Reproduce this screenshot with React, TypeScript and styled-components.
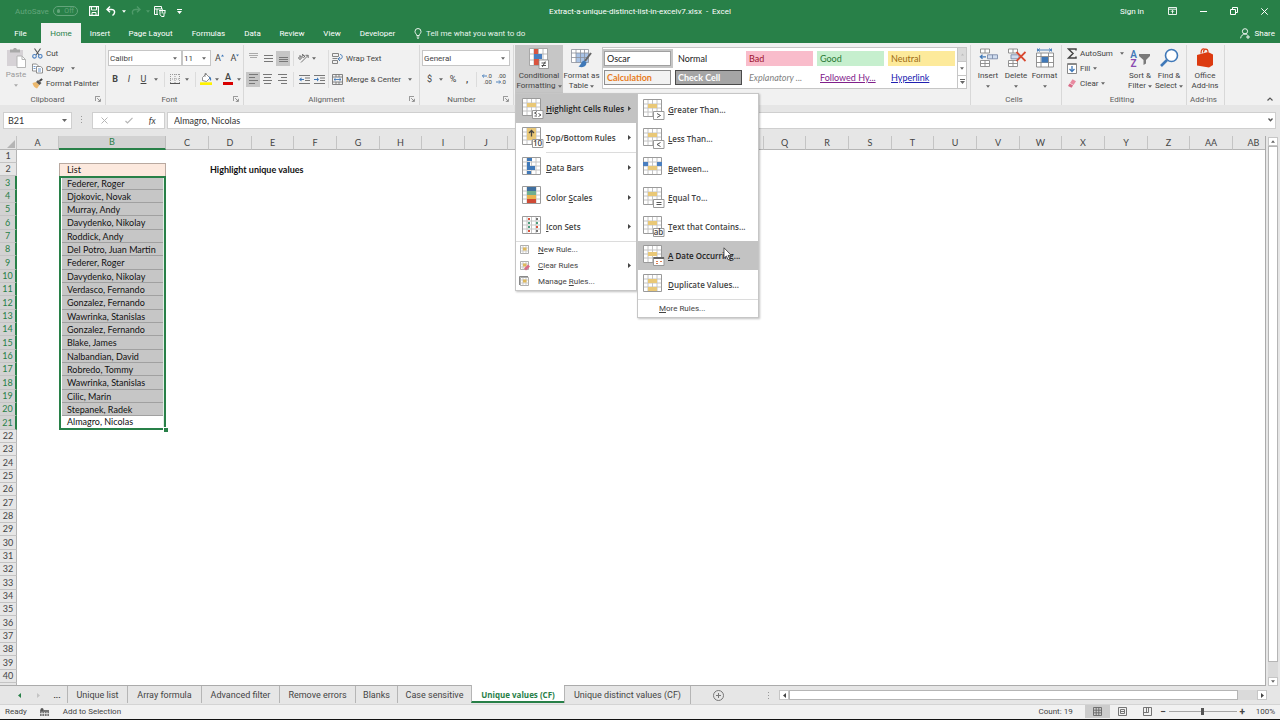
import React from "react";
import styled, { createGlobalStyle, css } from "styled-components";

const GREEN = "#288048";
const UI = 'Roboto, "Open Sans", sans-serif';
const MENU = '"Open Sans", "Noto Sans", sans-serif';
const CELL = 'Lato, "Open Sans", sans-serif';

const GlobalStyle = createGlobalStyle`
  * { box-sizing: border-box; }
  body { margin: 0; background: #e6e6e6; overflow: hidden; }
  button, input, select { font: inherit; color: inherit; margin: 0; }
  svg { display: block; flex: none; }
`;

const Window = styled.div`
  display: flex;
  flex-direction: column;
  height: 100vh;
  font-family: ${UI};
  font-size: 8px;
  line-height: 11px;
  color: #444;
  background: #e6e6e6;
`;

const PlainButton = styled.button`
  display: flex;
  align-items: center;
  justify-content: center;
  border: 0;
  padding: 0;
  background: none;
  flex: none;
  white-space: nowrap;
`;

/* ---------- Title bar ---------- */

const TitleBar = styled.header`
  display: grid;
  grid-template-columns: 1fr auto 1fr;
  align-items: center;
  height: 23px;
  flex: none;
  padding-bottom: 1px;
  background: ${GREEN};
  color: #fff;
`;

const QuickAccess = styled.div`
  display: flex;
  align-items: center;
  padding-left: 15px;
`;

const AutoSave = styled.label`
  display: flex;
  align-items: center;
  justify-content: space-between;
  width: 63px;
  margin-right: 10px;
  color: #63a57b;
`;

const Toggle = styled.button`
  display: flex;
  align-items: center;
  gap: 4px;
  width: 25px;
  height: 10px;
  padding: 0 3px;
  border: 1px solid #63a57b;
  border-radius: 5px;
  background: none;
  font-size: 7px;
  line-height: 8px;
  color: #63a57b;
  &::before {
    content: "";
    width: 4px;
    height: 4px;
    border-radius: 2px;
    background: #63a57b;
  }
`;

const TitleButton = styled(PlainButton)<{ $w: number }>`
  width: ${(p) => p.$w}px;
  height: 20px;
`;

const TitleText = styled.h1`
  margin: 0;
  font-size: 8px;
  font-weight: 400;
`;

const WindowControls = styled.div`
  display: flex;
  align-items: center;
  justify-content: flex-end;
`;

/* ---------- Ribbon tabs ---------- */

const TabBar = styled.nav`
  display: flex;
  align-items: stretch;
  height: 20px;
  flex: none;
  background: ${GREEN};
  color: #fff;
`;

const RibbonTab = styled(PlainButton)<{ $w: number; $active?: boolean }>`
  width: ${(p) => p.$w}px;
  ${(p) =>
    p.$active &&
    css`
      background: #f1f1f1;
      color: ${GREEN};
    `}
`;

const TellMe = styled(PlainButton)`
  gap: 4px;
  padding-left: 9px;
  color: #e4f2e9;
`;

const Share = styled(PlainButton)`
  gap: 4px;
  margin-left: auto;
  padding-right: 5px;
`;

/* ---------- Ribbon ---------- */

const Ribbon = styled.section`
  display: flex;
  height: 62px;
  flex: none;
  padding-top: 2px;
  background: #f1f1f1;
`;

const Group = styled.div<{ $w?: number }>`
  display: flex;
  flex-direction: column;
  position: relative;
  ${(p) => (p.$w ? `width: ${p.$w}px; flex: none;` : "flex: 1; min-width: 0;")}
  border-right: 1px solid #d8d8d8;
`;

const GroupBody = styled.div`
  display: flex;
  height: 48px;
  flex: none;
`;

const GroupLabel = styled.div`
  display: flex;
  align-items: center;
  height: 12px;
  padding-right: 4px;
  color: #5e5e5e;
  span {
    flex: 1;
    text-align: center;
  }
`;

const BigButton = styled.button<{ $w: number; $active?: boolean; $dim?: boolean }>`
  display: flex;
  flex-direction: column;
  align-items: center;
  width: ${(p) => p.$w}px;
  height: 48px;
  flex: none;
  border: 0;
  padding: 3px 0 0;
  background: ${(p) => (p.$active ? "#c6c6c6" : "none")};
  color: ${(p) => (p.$dim ? "#9a9a9a" : "#444")};
  white-space: nowrap;
  line-height: 10px;
  svg {
    margin-bottom: 2px;
  }
`;

const Caption = styled.span`
  display: flex;
  align-items: center;
  justify-content: center;
  gap: 2px;
  height: 10px;
  svg {
    margin: 0;
  }
`;

const Stack = styled.div<{ $w?: number; $pad?: number }>`
  display: flex;
  flex-direction: column;
  ${(p) => p.$w && `width: ${p.$w}px;`}
  padding: 1px 0 0 ${(p) => p.$pad ?? 0}px;
  flex: none;
`;

const SmallButton = styled(PlainButton)`
  justify-content: flex-start;
  gap: 3px;
  height: 15px;
`;

const Rows = styled.div<{ $pad?: number }>`
  display: flex;
  flex-direction: column;
  gap: 5px;
  padding: 5px 0 0 ${(p) => p.$pad ?? 0}px;
`;

const Row = styled.div`
  display: flex;
  align-items: center;
  height: 16px;
`;

const Tool = styled(PlainButton)<{ $w: number; $active?: boolean }>`
  width: ${(p) => p.$w}px;
  height: 15px;
  background: ${(p) => (p.$active ? "#c6c6c6" : "none")};
  font-size: 9px;
`;

const Bar = styled.i<{ $gap?: number; $h?: number }>`
  width: 1px;
  height: ${(p) => p.$h ?? 15}px;
  margin: 0 ${(p) => p.$gap ?? 4}px;
  background: #dcdcdc;
  flex: none;
`;

const Combo = styled.label<{ $w: number }>`
  display: flex;
  align-items: center;
  width: ${(p) => p.$w}px;
  height: 16px;
  padding-right: 4px;
  border: 1px solid #c6c6c6;
  background: #fff;
  flex: none;
  select {
    flex: 1;
    min-width: 0;
    height: 14px;
    appearance: none;
    border: 0;
    padding: 0 0 0 1px;
    background: none;
  }
`;

const Gallery = styled.div`
  display: flex;
  flex: 1;
  min-width: 0;
  height: 42px;
  margin: 2px 3px 0 2px;
  border: 1px solid #c6c6c6;
  background: #fff;
`;

const GalleryGrid = styled.div`
  display: grid;
  grid-template-columns: repeat(5, 1fr);
  grid-auto-rows: 15px;
  gap: 4px 4px;
  flex: 1;
  min-width: 0;
  padding: 3px 2px 0 1px;
`;

const StyleTile = styled.button<{
  $bg?: string;
  $fg?: string;
  $edge?: string;
  $picked?: boolean;
  $bold?: boolean;
  $italic?: boolean;
  $line?: boolean;
}>`
  overflow: hidden;
  padding: 0 0 0 2px;
  border: 1px solid ${(p) => p.$edge ?? "transparent"};
  outline: ${(p) => (p.$picked ? "2px solid #c6c6c6" : "none")};
  background: ${(p) => p.$bg ?? "#fff"};
  color: ${(p) => p.$fg ?? "#222"};
  font-family: ${CELL};
  font-size: 9px;
  line-height: 12px;
  text-align: left;
  white-space: nowrap;
  font-weight: ${(p) => (p.$bold ? 700 : 400)};
  font-style: ${(p) => (p.$italic ? "italic" : "normal")};
  text-decoration: ${(p) => (p.$line ? "underline" : "none")};
`;

const GallerySide = styled.div`
  display: grid;
  grid-template-rows: 1fr 1fr 1fr;
  width: 9px;
  border-left: 1px solid #c6c6c6;
  button {
    width: 8px;
    height: 100%;
  }
  button + button {
    border-top: 1px solid #c6c6c6;
  }
  button:first-child {
    background: #dadada;
  }
`;

/* ---------- Drop-down menus ---------- */

const MenuAnchor = styled.div`
  position: relative;
  flex: none;
  margin-left: 1px;
`;

const menuBox = css`
  position: absolute;
  width: 122px;
  margin: 0;
  list-style: none;
  border: 1px solid #c6c6c6;
  background: #fff;
  box-shadow: 1px 1px 2px rgba(0, 0, 0, 0.25);
  z-index: 10;
`;

const Menu = styled.ul`
  ${menuBox}
  top: 48px;
  left: 0;
  padding: 0 0 1px;
`;

const SubMenu = styled.ul`
  ${menuBox}
  top: -1px;
  left: 121px;
  padding: 1px 0;
`;

const MenuRow = styled.li<{ $h: number; $active?: boolean }>`
  position: relative;
  height: ${(p) => p.$h}px;
  background: ${(p) => (p.$active ? "#c3c3c3" : "none")};
  color: ${(p) => (p.$active ? "#222" : "#444")};
`;

const MenuButton = styled.button<{ $bold?: boolean; $gap?: number; $pad?: number }>`
  display: flex;
  align-items: center;
  gap: ${(p) => p.$gap ?? 3}px;
  width: 100%;
  height: 100%;
  padding: 0 5px 0 ${(p) => p.$pad ?? 5}px;
  border: 0;
  background: none;
  text-align: left;
  white-space: nowrap;
  font-family: ${(p) => (p.$bold ? MENU : UI)};
  font-weight: ${(p) => (p.$bold ? 600 : 400)};
  span {
    flex: 1;
  }
`;

const MenuRule = styled.li<{ $inset?: number }>`
  height: 1px;
  margin-left: ${(p) => p.$inset ?? 0}px;
  background: #dcdcdc;
`;

const Pointer = styled.svg`
  position: absolute;
  top: 6px;
  left: 85px;
`;

/* ---------- Formula bar ---------- */

const FormulaBar = styled.div`
  display: flex;
  align-items: center;
  height: 31px;
  flex: none;
  padding: 0 4px 1px 3px;
  background: #e6e6e6;
  font-family: ${CELL};
  font-size: 9px;
`;

const BarField = styled.label<{ $w?: number }>`
  display: flex;
  align-items: center;
  ${(p) => (p.$w ? `width: ${p.$w}px; flex: none;` : "flex: 1; min-width: 0;")}
  height: 17px;
  padding-right: ${(p) => (p.$w ? 4 : 2)}px;
  border: 1px solid #cfcfcf;
  background: #fff;
  input {
    flex: 1;
    min-width: 0;
    height: 15px;
    border: 0;
    padding: 0 0 0 ${(p) => (p.$w ? 4 : 6)}px;
    background: none;
    outline: 0;
    color: #333;
  }
`;

const BarButtons = styled.div`
  display: flex;
  width: 73px;
  height: 17px;
  margin-right: 2px;
  border: 1px solid #cfcfcf;
  background: #fff;
  flex: none;
  button {
    flex: 1;
  }
`;

/* ---------- Grid ---------- */

const Workspace = styled.main`
  display: flex;
  flex: 1;
  min-height: 0;
`;

const SheetPane = styled.div`
  flex: 1;
  min-width: 0;
  overflow: hidden;
  border-right: 1px solid #ababab;
  border-bottom: 1px solid #ababab;
  background: #fff;
`;

const Sheet = styled.table`
  width: calc(100% + 10px);
  table-layout: fixed;
  border-collapse: separate;
  border-spacing: 0;
  font-family: ${CELL};
  font-size: 9px;
  line-height: 12px;
  color: #111;
  th,
  td {
    padding: 0;
    white-space: nowrap;
  }
`;

const ColHead = styled.th<{ $on?: boolean }>`
  height: 14px;
  border-right: 1px solid ${(p) => (p.$on ? "#bdbdbd" : "#c4c4c4")};
  border-bottom: ${(p) => (p.$on ? `2px solid ${GREEN}` : "1px solid #b5b5b5")};
  background: ${(p) => (p.$on ? "#d2d2d2" : "#e6e6e6")};
  color: ${(p) => (p.$on ? GREEN : "#444")};
  font-weight: 400;
`;

const RowHead = styled.th<{ $on?: boolean }>`
  border-right: ${(p) => (p.$on ? `2px solid ${GREEN}` : "1px solid #b5b5b5")};
  border-bottom: 1px solid #c4c4c4;
  background: ${(p) => (p.$on ? "#d2d2d2" : "#e6e6e6")};
  color: ${(p) => (p.$on ? GREEN : "#444")};
  font-weight: 400;
`;

const SheetRow = styled.tr<{ $tall: boolean }>`
  height: ${(p) => (p.$tall ? 14 : 13)}px;
`;

const Cell = styled.td<{ $kind?: "title" | "picked" | "head" | "current" }>`
  ${(p) =>
    p.$kind === "title" &&
    css`
      font-weight: 700;
      && {
        padding-left: 1px;
      }
    `}
  ${(p) =>
    p.$kind === "head" &&
    css`
      border: 1px solid #b9a9a0;
      border-bottom: 0;
      background: #fce9de;
      && {
        padding-left: 7px;
      }
    `}
  ${(p) =>
    (p.$kind === "picked" || p.$kind === "current") &&
    css`
      position: relative;
      border: 0 solid ${GREEN};
      border-width: 0 2px;
      background: ${p.$kind === "picked" ? "#c6c6c6" : "#fff"};
      box-shadow: inset 1px 0 #fff, inset -1px 0 #e4efe8, inset 0 -1px ${p.$kind === "picked" ? "#a0a0a0" : "#fff"};
      && {
        padding-left: 6px;
      }
    `}
  ${(p) => p.$kind === "current" && `border-bottom-width: 2px;`}
`;

const FirstCell = styled(Cell)`
  border-top-width: 2px;
`;

const FillHandle = styled.i`
  position: absolute;
  right: -4px;
  bottom: -4px;
  width: 5px;
  height: 5px;
  border: 1px solid #fff;
  border-width: 1px 0 0 1px;
  background: ${GREEN};
`;

const VScroll = styled.div`
  display: flex;
  flex-direction: column;
  width: 14px;
  flex: none;
  padding: 1px 2px 0 2px;
  background: #e6e6e6;
`;

const ScrollButton = styled(PlainButton)`
  width: 10px;
  height: 9px;
  border: 1px solid #c6c6c6;
  background: #fff;
`;

const VTrack = styled.div`
  flex: 1;
  padding-bottom: 15px;
  background: #dadada;
`;

const Thumb = styled.div`
  height: 100%;
  border: 1px solid #b5b5b5;
  background: #fff;
`;

/* ---------- Sheet tabs ---------- */

const SheetBar = styled.div`
  display: flex;
  align-items: stretch;
  height: 19px;
  flex: none;
  padding-right: 13px;
  background: #e6e6e6;
  border-bottom: 1px solid #d4d4d4;
`;

const SheetNav = styled.div`
  display: flex;
  align-items: center;
  width: 67px;
  flex: none;
  padding-left: 10px;
  color: #222;
  font-weight: 700;
`;

const SheetTab = styled(PlainButton)<{ $w: number; $active?: boolean }>`
  width: ${(p) => p.$w}px;
  height: 17px;
  padding-top: 1px;
  border-left: 1px solid #b5b5b5;
  font-size: 9px;
  ${(p) =>
    p.$active &&
    css`
      margin-top: -1px;
      height: 18px;
      padding-top: 3px;
      border-bottom: 2px solid ${GREEN};
      background: #fff;
      color: ${GREEN};
      font-family: ${MENU};
      font-weight: 700;
      font-size: 8px;
    `}
`;

const SheetAdd = styled(PlainButton)`
  width: 56px;
  border-left: 1px solid #b5b5b5;
`;

const HScroll = styled.div`
  display: flex;
  align-items: center;
  flex: 1;
  margin-left: 22px;
`;

const HButton = styled(ScrollButton)`
  height: 10px;
`;

const HTrack = styled.div`
  flex: 1;
  height: 10px;
  padding-right: 19px;
  background: #dadada;
`;

/* ---------- Status bar ---------- */

const StatusBar = styled.footer`
  display: flex;
  align-items: center;
  height: 15px;
  flex: none;
  padding: 0 5px 1px 5px;
  border-bottom: 1px solid #111;
  background: #f1f1f1;
`;

const StatusRight = styled.div`
  display: flex;
  align-items: center;
  margin-left: auto;
`;

const ViewButton = styled(PlainButton)<{ $active?: boolean }>`
  width: 25px;
  height: 13px;
  background: ${(p) => (p.$active ? "#cccccc" : "none")};
`;

const Zoom = styled.input`
  width: 68px;
  height: 9px;
  margin: 0 2px;
  appearance: none;
  background: linear-gradient(#a6a6a6, #a6a6a6) center / 100% 1px no-repeat;
  &::-webkit-slider-thumb {
    appearance: none;
    width: 3px;
    height: 7px;
    background: #555;
  }
`;

/* ---------- Icons ---------- */

const Caret = ({ c = "#666", up = false, w = 5 }: { c?: string; up?: boolean; w?: number }) => (
  <svg width={w} height="3" viewBox="0 0 5 3">
    <path d={up ? "M0 3h5L2.500 0z" : "M0 0h5L2.500 3z"} fill={c} />
  </svg>
);

const SideCaret = ({ c = "#444", left = false }: { c?: string; left?: boolean }) => (
  <svg width="3" height="5" viewBox="0 0 3 5">
    <path d={left ? "M3 0v5L0 2.500z" : "M0 0v5L3 2.500z"} fill={c} />
  </svg>
);

const Launcher = () => (
  <svg width="6" height="6" viewBox="0 0 6 6" fill="none" stroke="#777" strokeWidth=".8">
    <path d="M.4 5V.4H5M2.200 2.200L5.200 5.200M5.400 2.800v2.600H2.800" />
  </svg>
);

const SaveIcon = () => (
  <svg width="10" height="10" viewBox="0 0 10 10" fill="none" stroke="#fff">
    <path d="M.6.6h8.800v8.800H.6z" strokeWidth="1.200" />
    <path d="M2.500 1v3h5V1M3 9V6.500h4V9" />
  </svg>
);

const UndoIcon = ({ flip, c = "#fff" }: { flip?: boolean; c?: string }) => (
  <svg width="10" height="10" viewBox="0 0 10 10" fill="none" stroke={c} strokeWidth="1.400">
    <path
      d={flip ? "M6 .5L9 3.500 6 6.300M9 3.500H4.500C1.500 3.500.8 6 2 8.500" : "M4 .5L1 3.500 4 6.300M1 3.500h4.500C9 3.500 9.800 7 6.500 9.500"}
    />
  </svg>
);

const TouchIcon = () => (
  <svg width="12" height="11" viewBox="0 0 12 11" fill="none" stroke="#fff">
    <path d="M7.500 3V.5h-7v8H4M.5 3h7M3 3v5" />
    <path d="M5 4.500h6.500M6 4.500v4l1.500 2h2.500V6.500M8.200 2.500v5M11 4.500v3" />
  </svg>
);

const CustomizeIcon = () => (
  <svg width="5" height="5" viewBox="0 0 5 5" fill="#fff">
    <path d="M0 0h5v1H0zM0 2h5L2.500 5z" />
  </svg>
);

const BulbIcon = () => (
  <svg width="8" height="11" viewBox="0 0 8 11" fill="none" stroke="#fff" strokeWidth=".9">
    <path d="M2.700 7.500C2.700 6 1 5.500 1 3.500a3 3 0 016 0C7 5.500 5.300 6 5.300 7.500zM2.700 9h2.600M3.200 10.300h1.600" />
  </svg>
);

const PersonIcon = () => (
  <svg width="11" height="11" viewBox="0 0 11 11" fill="none" stroke="#fff" strokeWidth=".9">
    <circle cx="5" cy="3.300" r="2.600" />
    <path d="M.6 10.300C1 7.500 3 6 5 6c1 0 1.800.3 2.500.9M8 7v4M6 9h4" />
  </svg>
);

const PasteIcon = () => (
  <svg width="19" height="20" viewBox="0 0 19 20">
    <path d="M0 2h16v16H0z" fill="#d6d2d6" />
    <path d="M3 1.500h3L7 0h2l1 1.500h3V4.500H3z" fill="#a9a9a9" />
    <path d="M10 8h5l3.500 3.500V19.500H10z" fill="#fff" stroke="#b5b5b5" />
    <path d="M15 8v3.500h3.500" fill="none" stroke="#b5b5b5" />
  </svg>
);

const CutIcon = () => (
  <svg width="11" height="11" viewBox="0 0 11 11" fill="none">
    <path d="M2.500.5l4.500 6.500M8.500.5L4 7" stroke="#555" strokeWidth="1.100" />
    <circle cx="2.500" cy="8.300" r="1.800" stroke="#4a7fc0" strokeWidth="1.100" />
    <circle cx="8.300" cy="8.300" r="1.800" stroke="#4a7fc0" strokeWidth="1.100" />
  </svg>
);

const CopyIcon = () => (
  <svg width="11" height="11" viewBox="0 0 11 11" fill="#fff" stroke="#777" strokeWidth=".8">
    <path d="M.5 1h4L6 2.500V8H.5z" />
    <path d="M4.500 3.500h4L10.500 5v5h-6z" />
    <path d="M1.500 3.500h2M1.500 5.500h2M6 6h3M6 8h3" stroke="#4a7fc0" />
  </svg>
);

const BrushIcon = () => (
  <svg width="11" height="11" viewBox="0 0 11 11">
    <path d="M.5 5l3.500-1 3.500 3-2.500 3.500C3 10 1 8 .5 5z" fill="#ecb86c" />
    <path d="M4 4l2-2 3.500 3-2 2z" fill="#555" />
    <path d="M7.500 3L10.200 1" stroke="#444" strokeWidth="2" />
  </svg>
);

const BordersIcon = () => (
  <svg width="10" height="10" viewBox="0 0 10 10" fill="none" stroke="#999" strokeDasharray="1 1">
    <path d="M.5 0v9M5 0v9M9.500 0v9M0 .5h10M0 5h10" />
    <path d="M0 9.500h10" stroke="#555" strokeDasharray="none" />
  </svg>
);

const FillColorIcon = () => (
  <svg width="12" height="12" viewBox="0 0 12 12">
    <path d="M2.500 4.500L6 1l4 4-3.500 3.500-4-1z" fill="#fff" stroke="#777" strokeWidth=".8" />
    <path d="M5 4V.5h1.500" stroke="#777" fill="none" strokeWidth=".8" />
    <path d="M9 3.500c2 .5 2.500 2 2 4.500-1-1-2-2-2-4.500z" fill="#3f78b8" />
    <path d="M0 9.300h12V12H0z" fill="#fff200" />
  </svg>
);

const FontColor = styled.span`
  border-bottom: 3px solid #d80000;
  padding: 0 2px;
  line-height: 9px;
  font-weight: 600;
`;

const GrowFont = styled.span`
  display: flex;
  font-size: 9px;
  svg {
    margin-top: 1px;
  }
`;

const Lines = ({ rows, w = 9, c = "#777" }: { rows: [number, number, number][]; w?: number; c?: string }) => (
  <svg width={w} height="10" viewBox={`0 0 ${w} 10`} fill={c}>
    {rows.map(([x, y, len], i) => (
      <rect key={i} x={x} y={y} width={len} height="1" />
    ))}
  </svg>
);

const OrientIcon = () => (
  <svg width="11" height="10" viewBox="0 0 11 10" fill="none" stroke="#666" strokeWidth=".9">
    <path d="M3 9.500l7-7M7.500 2.300h2.700V5" />
    <circle cx="2" cy="5" r="1.300" />
    <path d="M3.500 4L1.500 2M4 1l3 3" />
    <circle cx="5.300" cy="3.300" r="1.200" />
  </svg>
);

const IndentIcon = ({ right }: { right?: boolean }) => (
  <svg width="11" height="9" viewBox="0 0 11 9" fill="#777">
    <path d="M0 0h11v1H0zM6 2.500h5v1H6zM6 5h5v1H6zM0 8h11v1H0z" />
    <path d={right ? "M0 4h3V2.300l2 2.100-2 2.100V5H0z" : "M5 4H2.500V2.300L0 4.400l2.500 2.100V5H5z"} fill="#3f78b8" />
  </svg>
);

const WrapIcon = () => (
  <svg width="11" height="11" viewBox="0 0 11 11" fill="none" stroke="#777" strokeWidth=".9">
    <path d="M.5.5h6v3h-6zM.5 7.500h5v3h-5zM.5 5.500h5" />
    <path d="M8 1.500c3 0 3 4.500 0 4.500H6.500M8 4L6 6l2 2" stroke="#3f78b8" />
  </svg>
);

const MergeIcon = () => (
  <svg width="11" height="11" viewBox="0 0 11 11" fill="none" stroke="#777" strokeWidth=".9">
    <path d="M.5.5h10v10H.5zM.5 3h10M.5 8h10M4 .5V3M7 .5V3M4 8v2.500M7 8v2.500" />
    <path d="M2 5.500h7M3.500 4.300L2 5.500l1.500 1.200M7.500 4.300L9 5.500 7.500 6.700" stroke="#3f78b8" />
  </svg>
);

const Decimals = styled.span<{ $down?: boolean }>`
  display: flex;
  flex-direction: column;
  align-items: ${(p) => (p.$down ? "flex-end" : "flex-start")};
  font-size: 6px;
  line-height: 6px;
  span {
    display: flex;
    align-items: center;
  }
`;

const BlueArrow = ({ right }: { right?: boolean }) => (
  <svg width="5" height="4" viewBox="0 0 5 4" fill="none" stroke="#3f78b8" strokeWidth=".9">
    <path d={right ? "M0 2h4.500M3 .4L4.600 2 3 3.600" : "M5 2H.5M2 .4L.4 2 2 3.600"} />
  </svg>
);

const CondFormatIcon = () => (
  <svg width="20" height="21" viewBox="0 0 20 21">
    <path d="M.5.5h18v17H.5z" fill="#fff" stroke="#999" strokeWidth=".8" />
    <path d="M.5 6h18M.5 12h18M5 .5v17M14 .5v17M9.500 .5v17" stroke="#aaa" strokeWidth=".8" fill="none" />
    <path d="M5 1h4v5H5zM5 11h5v6H5z" fill="#d9543f" />
    <path d="M5 6h8v5H5z" fill="#4a7fc0" />
    <path d="M10 12h9.500v8.500H10z" fill="#fff" stroke="#888" strokeWidth=".8" />
    <path d="M12.500 15h4.500M12.500 17.500h4.500M16.300 13.500l-3 5.500" stroke="#444" strokeWidth=".9" />
  </svg>
);

const FormatTableIcon = () => (
  <svg width="21" height="21" viewBox="0 0 21 21">
    <path d="M.5 1.500h17v13H.5z" fill="#fff" />
    <path d="M5 5h12.500v9.500H5z" fill="#a9c3e6" />
    <path d="M.5 1.500h17v13H.5zM.5 5h17M.5 9.500h17M5 1.500v13M9.500 1.500v13M13.500 1.500v13" fill="none" stroke="#8a8f99" strokeWidth=".8" />
    <path d="M20 5l-6 8" stroke="#666" strokeWidth="2" />
    <path d="M13.500 12.500c-3 0-3 4-6 6 4 1.500 8 .5 8-4z" fill="#3f78b8" />
  </svg>
);

const CellsIcon = ({ kind }: { kind: "insert" | "delete" | "format" }) => (
  <svg width="20" height="21" viewBox="0 0 20 21" fill="none" strokeWidth=".9">
    {kind === "format" ? (
      <>
        <path d="M2.500.5v3M16.500.5v3M3 2h13M5 .5L3 2l2 1.500M14 .5L16 2l-2 1.500" stroke="#3f78b8" />
        <path d="M1.500 5h17v14h-17z" fill="#fff" stroke="#888" />
        <path d="M1.500 8.500h17M1.500 14.500h17M6 5v14M13.500 5v14" stroke="#888" />
        <path d="M6.500 9h6.500v5.500H6.500z" fill="#3f78b8" />
      </>
    ) : (
      <>
        <path d="M2.500 1h9v4h-9zM7 1v4M2.500 12.500h9v6h-9zM7 12.500v6M2.500 15.500h9" stroke="#888" fill="#fff" />
        {kind === "insert" ? (
          <>
            <path d="M9.500 6.800h10v4h-10zM14.500 6.800v4" fill="#cfdcef" stroke="#7a8ba8" />
            <path d="M8 8.800H2.500M4.500 6.800l-2.200 2 2.200 2" stroke="#3f78b8" strokeWidth="1.200" />
          </>
        ) : (
          <>
            <path d="M5 6.800h8v4H5z" fill="#cfdcef" stroke="#7a8ba8" />
            <path d="M10.500 4l9 9M19.500 4l-9 9" stroke="#d9482f" strokeWidth="1.800" />
          </>
        )}
      </>
    )}
  </svg>
);

const SigmaIcon = () => (
  <svg width="10" height="11" viewBox="0 0 10 11" fill="none" stroke="#444" strokeWidth="1.500">
    <path d="M9 2.500V1H1.500L6 5.500 1.500 10H9V8.500" />
  </svg>
);

const FillIcon = () => (
  <svg width="10" height="11" viewBox="0 0 10 11" fill="none">
    <path d="M.5.5h9v10h-9z" fill="#fff" stroke="#888" />
    <path d="M.5 1.500h9" stroke="#888" />
    <path d="M5 3v5.500M2.500 6L5 8.500 7.500 6" stroke="#3f78b8" strokeWidth="1.300" />
  </svg>
);

const EraserIcon = () => (
  <svg width="10" height="9" viewBox="0 0 10 9">
    <path d="M5.500.3l3.500 2L6.500 6 3 4z" fill="#e98aa0" />
    <path d="M2.600 4.500l3.500 2L4.500 8.800 1 7z" fill="#d96c87" />
  </svg>
);

const SortLetters = styled.span`
  display: flex;
  align-items: center;
  height: 21px;
  margin-bottom: 2px;
  gap: 2px;
  svg {
    margin: 2px 0 0;
  }
  span {
    display: flex;
    flex-direction: column;
    font-size: 10px;
    line-height: 9px;
    font-weight: 600;
    color: #3f78b8;
  }
  b {
    font-weight: 600;
    color: #8a4bb0;
  }
`;

const FunnelIcon = () => (
  <svg width="11" height="11" viewBox="0 0 11 11" fill="#7a7a7a">
    <path d="M0 0h11v2L7 6v3.500L4.500 11V6L0 2z" />
  </svg>
);

const FindIcon = () => (
  <svg width="19" height="21" viewBox="0 0 19 21" fill="none" stroke="#3f78b8">
    <circle cx="11.500" cy="7.500" r="6" strokeWidth="1.600" fill="#fff" />
    <path d="M7 12l-6 6" strokeWidth="2.600" />
  </svg>
);

const AddinsIcon = () => (
  <svg width="18" height="21" viewBox="0 0 18 21">
    <path d="M1 7l11-3 5 2.500V17l-4 2.500L1 17.500z" fill="#dc3a10" />
    <path d="M5 5.500C5 1 7 .3 9 1.300M7.500 4.500C7.500 0 12 0 12 4" fill="none" stroke="#dc3a10" strokeWidth="1.200" />
  </svg>
);

type Blot = [number, number, number, number, string];

const RuleIcon = ({ blots, badge, children }: { blots: Blot[]; badge?: boolean; children?: React.ReactNode }) => (
  <svg width="22" height="22" viewBox="0 0 22 22">
    <path d="M.5.5h18v17H.5z" fill="#fff" />
    <path d="M.5 5h18M.5 9h18M.5 13h18M5 .5v17M14 .5v17M9.500 .5v17" fill="none" stroke="#c4c4c4" />
    <path d="M.5.5h18v17H.5z" fill="none" stroke="#9a9a9a" />
    {blots.map(([x, y, w, h, c], i) => (
      <rect key={i} x={x} y={y} width={w} height={h} fill={c} />
    ))}
    {badge && <path d="M10.500 12.500h10.500v8H10.500z" fill="#fff" stroke="#999" />}
    <g fill="none" stroke="#444" strokeWidth=".9">
      {children}
    </g>
  </svg>
);

const GOLD = "#e9c877";
const MID: Blot[] = [[5, 5, 9, 4, GOLD]];

const BadgeText = ({ children }: { children: string }) => (
  <text x="15.500" y="19" textAnchor="middle" fontSize="8" fill="#444" stroke="none">
    {children}
  </text>
);

const TinyRuleIcon = ({ kind }: { kind: "new" | "clear" | "manage" }) => (
  <svg width="11" height="11" viewBox="0 0 11 11" fill="none">
    {kind === "manage" && <path d="M.5 9V.5H9" stroke="#888" />}
    <path d="M1.500 1.500h8v8h-8z" fill="#fff" stroke="#999" strokeWidth=".8" />
    <path d="M4 1.500v8M7 1.500v8M1.500 4h8M1.500 7h8" stroke="#bbb" strokeWidth=".7" />
    <path d="M4 3.500h3.500v3H4z" fill="#dfb95c" />
    {kind === "clear" && <path d="M5 8.500l4-4 2 2-4 4z" fill="#d96c87" />}
  </svg>
);

/* ---------- Data ---------- */

const COLUMNS = "A B C D E F G H I J K L M N O P Q R S T U V W X Y Z AA AB".split(" ");

const NAMES = [
  "Federer, Roger",
  "Djokovic, Novak",
  "Murray, Andy",
  "Davydenko, Nikolay",
  "Roddick, Andy",
  "Del Potro, Juan Martin",
  "Federer, Roger",
  "Davydenko, Nikolay",
  "Verdasco, Fernando",
  "Gonzalez, Fernando",
  "Wawrinka, Stanislas",
  "Gonzalez, Fernando",
  "Blake, James",
  "Nalbandian, David",
  "Robredo, Tommy",
  "Wawrinka, Stanislas",
  "Cilic, Marin",
  "Stepanek, Radek",
  "Almagro, Nicolas",
];

const RIBBON_TABS: [string, number][] = [
  ["File", 41],
  ["Home", 40],
  ["Insert", 38],
  ["Page Layout", 63],
  ["Formulas", 53],
  ["Data", 35],
  ["Review", 44],
  ["View", 36],
  ["Developer", 55],
];

const SHEETS: [string, number][] = [
  ["Unique list", 60],
  ["Array formula", 74],
  ["Advanced filter", 78],
  ["Remove errors", 76],
  ["Blanks", 42],
  ["Case sensitive", 74],
  ["Unique values (CF)", 93],
  ["Unique distinct values (CF)", 126],
];

const columnWidth = (i: number) => (i === 0 ? 42 : i === 1 ? 107 : i % 3 === 1 ? 42 : 43);

function SheetCell({ row, col }: { row: number; col: number }) {
  if (col === 1 && row === 2) return <Cell $kind="head">List</Cell>;
  if (col === 3 && row === 2) return <Cell $kind="title">Highlight unique values</Cell>;
  if (col === 1 && row === 3) return <FirstCell $kind="picked">{NAMES[0]}</FirstCell>;
  if (col === 1 && row > 3 && row < 21) return <Cell $kind="picked">{NAMES[row - 3]}</Cell>;
  if (col === 1 && row === 21)
    return (
      <Cell $kind="current">
        {NAMES[18]}
        <FillHandle />
      </Cell>
    );
  return <Cell />;
}

function RulesSubMenu() {
  return (
    <SubMenu>
      <MenuRow $h={29}>
        <MenuButton $bold>
          <RuleIcon blots={MID} badge><path d="M14 14.500l3.500 2-3.500 2" /></RuleIcon>
          <span><u>G</u>reater Than...</span>
        </MenuButton>
      </MenuRow>
      <MenuRow $h={29}>
        <MenuButton $bold>
          <RuleIcon blots={MID} badge><path d="M17.500 14.500l-3.500 2 3.500 2" /></RuleIcon>
          <span><u>L</u>ess Than...</span>
        </MenuButton>
      </MenuRow>
      <MenuRow $h={30}>
        <MenuButton $bold>
          <RuleIcon blots={[[0, 5, 5, 4, "#4a7fc0"], [14, 5, 5, 4, "#4a7fc0"], [5, 9, 9, 4, GOLD]]} />
          <span><u>B</u>etween...</span>
        </MenuButton>
      </MenuRow>
      <MenuRow $h={29}>
        <MenuButton $bold>
          <RuleIcon blots={MID} badge><path d="M13.500 15.500h5M13.500 17.500h5" /></RuleIcon>
          <span><u>E</u>qual To...</span>
        </MenuButton>
      </MenuRow>
      <MenuRow $h={29}>
        <MenuButton $bold>
          <RuleIcon blots={MID} badge><BadgeText>ab</BadgeText></RuleIcon>
          <span><u>T</u>ext that Contains...</span>
        </MenuButton>
      </MenuRow>
      <MenuRow $h={29} $active>
        <MenuButton $bold>
          <RuleIcon blots={[[5, 7, 9, 4, GOLD]]} badge>
            <path d="M10.500 12h10.500v2H10.500z" fill="#666" stroke="none" />
            <path d="M13 16.500h2M17 16.500h2M13 18.500h2" stroke="#d9703f" />
          </RuleIcon>
          <span><u>A</u> Date Occurring...</span>
        </MenuButton>
        <Pointer width="9" height="14" viewBox="0 0 9 14">
          <path d="M1 .8v10.400l2.400-2.200 1.700 3.800 1.700-.8-1.700-3.600h3.200z" fill="#fff" stroke="#333" strokeWidth=".8" />
        </Pointer>
      </MenuRow>
      <MenuRow $h={29}>
        <MenuButton $bold>
          <RuleIcon blots={[[5, 5, 9, 4, GOLD], [5, 13, 9, 4, GOLD]]} />
          <span><u>D</u>uplicate Values...</span>
        </MenuButton>
      </MenuRow>
      <MenuRule />
      <MenuRow $h={16}>
        <MenuButton $pad={21}>
          <span><u>M</u>ore Rules...</span>
        </MenuButton>
      </MenuRow>
    </SubMenu>
  );
}

function ConditionalFormattingMenu() {
  const bars: Blot[] = [[5, 1, 5, 3, "#3f78b8"], [5, 5, 3, 4, "#3f78b8"], [5, 9, 8, 4, "#3f78b8"], [5, 14, 4, 3, "#3f78b8"]];
  const scales: Blot[] = [[5, 1, 9, 4, "#3f6f9f"], [5, 5, 9, 4, "#6fae8f"], [5, 9, 9, 4, "#e9b34f"], [5, 13, 9, 4, "#cf4a35"]];
  return (
    <Menu>
      <MenuRow $h={29} $active>
        <MenuButton $bold $pad={6} $gap={2}>
          <RuleIcon blots={MID} badge>
            <path d="M15 13.500l-2.500 1.500 2.500 1.500M12.500 18h2.500M16.500 15.500l2.500 1.500-2.500 1.500" />
          </RuleIcon>
          <span><u>H</u>ighlight Cells Rules</span>
          <SideCaret />
        </MenuButton>
        <RulesSubMenu />
      </MenuRow>
      <MenuRow $h={29}>
        <MenuButton $bold $pad={6} $gap={2}>
          <RuleIcon blots={[[5, 1, 9, 12, GOLD]]} badge>
            <path d="M9.500 9.500v-6M7 6l2.500-2.500L12 6" strokeWidth="1.300" />
            <BadgeText>10</BadgeText>
          </RuleIcon>
          <span><u>T</u>op/Bottom Rules</span>
          <SideCaret />
        </MenuButton>
      </MenuRow>
      <MenuRule $inset={30} />
      <MenuRow $h={29}>
        <MenuButton $bold $pad={6} $gap={2}>
          <RuleIcon blots={bars} />
          <span><u>D</u>ata Bars</span>
          <SideCaret />
        </MenuButton>
      </MenuRow>
      <MenuRow $h={30}>
        <MenuButton $bold $pad={6} $gap={2}>
          <RuleIcon blots={scales} />
          <span>Color <u>S</u>cales</span>
          <SideCaret />
        </MenuButton>
      </MenuRow>
      <MenuRow $h={29}>
        <MenuButton $bold $pad={6} $gap={2}>
          <RuleIcon
            blots={[[6, 2, 2, 2, "#d9543f"], [6, 6, 2, 2, "#4f9f7f"], [6, 10, 2, 2, "#4f9f7f"], [6, 14, 2, 2, "#d9543f"],
              [14, 2, 2, 2, "#777"], [14, 6, 2, 2, "#4f9f7f"], [14, 10, 2, 2, "#d9543f"], [14, 14, 2, 2, "#777"]]}
          />
          <span><u>I</u>con Sets</span>
          <SideCaret />
        </MenuButton>
      </MenuRow>
      <MenuRule />
      <MenuRow $h={15}>
        <MenuButton $pad={3} $gap={8}>
          <TinyRuleIcon kind="new" />
          <span><u>N</u>ew Rule...</span>
        </MenuButton>
      </MenuRow>
      <MenuRow $h={16}>
        <MenuButton $pad={3} $gap={8}>
          <TinyRuleIcon kind="clear" />
          <span><u>C</u>lear Rules</span>
          <SideCaret />
        </MenuButton>
      </MenuRow>
      <MenuRow $h={16}>
        <MenuButton $pad={3} $gap={8}>
          <TinyRuleIcon kind="manage" />
          <span>Manage <u>R</u>ules...</span>
        </MenuButton>
      </MenuRow>
    </Menu>
  );
}

export default function App() {
  return (
    <Window>
      <GlobalStyle />

      <TitleBar>
        <QuickAccess>
          <AutoSave>AutoSave <Toggle>Off</Toggle></AutoSave>
          <TitleButton $w={12} aria-label="Save"><SaveIcon /></TitleButton>
          <TitleButton $w={22} aria-label="Undo"><UndoIcon /></TitleButton>
          <Caret c="#fff" w={4} />
          <TitleButton $w={20} aria-label="Redo"><UndoIcon flip c="#4f9a6a" /></TitleButton>
          <Caret c="#4f9a6a" w={4} />
          <TitleButton $w={20} aria-label="Touch mode"><TouchIcon /></TitleButton>
          <TitleButton $w={18} aria-label="Customize"><CustomizeIcon /></TitleButton>
        </QuickAccess>
        <TitleText>Extract-a-unique-distinct-list-in-excelv7.xlsx&nbsp; -&nbsp; Excel</TitleText>
        <WindowControls>
          <TitleButton $w={48}>Sign in</TitleButton>
          <TitleButton $w={32} aria-label="Ribbon options">
            <svg width="9" height="8" viewBox="0 0 9 8" fill="none" stroke="#fff" strokeWidth=".9">
              <path d="M.5.5h8v7h-8zM.5 2.200h8M4.500 6.500v-3M3 4.800l1.500-1.500L6 4.800" />
            </svg>
          </TitleButton>
          <TitleButton $w={31} aria-label="Minimize">
            <svg width="7" height="1"><rect width="7" height="1" fill="#fff" /></svg>
          </TitleButton>
          <TitleButton $w={30} aria-label="Restore">
            <svg width="8" height="8" viewBox="0 0 8 8" fill="none" stroke="#fff">
              <path d="M.5 2.500h5v5h-5zM2.500 2.500v-2h5v5h-2" />
            </svg>
          </TitleButton>
          <TitleButton $w={31} aria-label="Close">
            <svg width="7" height="7" viewBox="0 0 7 7" stroke="#fff"><path d="M.3.3l6.400 6.400M6.700.3L.3 6.700" /></svg>
          </TitleButton>
        </WindowControls>
      </TitleBar>

      <TabBar>
        {RIBBON_TABS.map(([name, w]) => (
          <RibbonTab key={name} $w={w} $active={name === "Home"}>{name}</RibbonTab>
        ))}
        <TellMe><BulbIcon />Tell me what you want to do</TellMe>
        <Share><PersonIcon />Share</Share>
      </TabBar>

      <Ribbon>
        <Group $w={106}>
          <GroupBody>
            <BigButton $w={32} $dim><PasteIcon />Paste<Caption><Caret c="#aaa" w={4} /></Caption></BigButton>
            <Stack>
              <SmallButton><CutIcon />Cut</SmallButton>
              <SmallButton><CopyIcon />Copy&nbsp;&nbsp;<Caret w={4} /></SmallButton>
              <SmallButton><BrushIcon />Format Painter</SmallButton>
            </Stack>
          </GroupBody>
          <GroupLabel><span>Clipboard</span><Launcher /></GroupLabel>
        </Group>

        <Group $w={138}>
          <GroupBody>
            <Rows $pad={2}>
              <Row>
                <Combo $w={74}><select aria-label="Font"><option>Calibri</option></select><Caret w={4} /></Combo>
                <Combo $w={29}><select aria-label="Font size"><option>11</option></select><Caret w={4} /></Combo>
                <Tool $w={17} aria-label="Increase font size"><GrowFont>A<Caret c="#3f78b8" up w={3} /></GrowFont></Tool>
                <Tool $w={14} aria-label="Decrease font size"><GrowFont>A<Caret c="#3f78b8" w={3} /></GrowFont></Tool>
              </Row>
              <Row>
                <Tool $w={14}><b>B</b></Tool>
                <Tool $w={14}><i>I</i></Tool>
                <Tool $w={15}><u>U</u></Tool>
                <Tool $w={9} aria-label="Underline style"><Caret w={4} /></Tool>
                <Bar />
                <Tool $w={12} aria-label="Borders"><BordersIcon /></Tool>
                <Tool $w={12} aria-label="Border style"><Caret w={4} /></Tool>
                <Bar $gap={2} />
                <Tool $w={16} aria-label="Fill color"><FillColorIcon /></Tool>
                <Tool $w={6} aria-label="Fill color list"><Caret w={4} /></Tool>
                <Tool $w={16} aria-label="Font color"><FontColor>A</FontColor></Tool>
                <Tool $w={6} aria-label="Font color list"><Caret w={4} /></Tool>
              </Row>
            </Rows>
          </GroupBody>
          <GroupLabel><span>Font</span><Launcher /></GroupLabel>
        </Group>

        <Group $w={176}>
          <GroupBody>
            <Rows $pad={2}>
              <Row>
                <Tool $w={15} aria-label="Top align"><Lines rows={[[0, 0, 9], [0, 2, 9], [1, 4, 7]]} c="#aaa" /></Tool>
                <Tool $w={15} aria-label="Middle align"><Lines rows={[[0, 2, 9], [0, 5, 9], [0, 8, 9]]} /></Tool>
                <Tool $w={14} $active aria-label="Bottom align"><Lines rows={[[0, 4, 9], [0, 6, 9], [0, 8, 9]]} /></Tool>
                <Bar $gap={3} />
                <Tool $w={13} aria-label="Orientation"><OrientIcon /></Tool>
                <Tool $w={8} aria-label="Orientation list"><Caret w={4} /></Tool>
              </Row>
              <Row>
                <Tool $w={14} $active aria-label="Align left"><Lines rows={[[0, 0, 9], [0, 3, 6], [0, 6, 9], [0, 9, 6]]} /></Tool>
                <Tool $w={15} aria-label="Center"><Lines rows={[[0, 0, 9], [1, 3, 7], [0, 6, 9], [1, 9, 7]]} /></Tool>
                <Tool $w={15} aria-label="Align right"><Lines rows={[[0, 0, 9], [3, 3, 6], [0, 6, 9], [3, 9, 6]]} /></Tool>
                <Bar $gap={3} />
                <Tool $w={15} aria-label="Decrease indent"><IndentIcon /></Tool>
                <Tool $w={15} aria-label="Increase indent"><IndentIcon right /></Tool>
              </Row>
            </Rows>
            <Rows><Bar $gap={1} $h={38} /></Rows>
            <Rows $pad={2}>
              <Row><SmallButton><WrapIcon />Wrap Text</SmallButton></Row>
              <Row>
                <SmallButton><MergeIcon />Merge &amp; Center&nbsp;&nbsp;<Caret w={4} /></SmallButton>
              </Row>
            </Rows>
          </GroupBody>
          <GroupLabel><span>Alignment</span><Launcher /></GroupLabel>
        </Group>

        <Group $w={94}>
          <GroupBody>
            <Rows $pad={2}>
              <Row>
                <Combo $w={88}><select aria-label="Number format"><option>General</option></select><Caret w={4} /></Combo>
              </Row>
              <Row>
                <Tool $w={15}>$</Tool>
                <Tool $w={8} aria-label="Currency list"><Caret w={4} /></Tool>
                <Tool $w={16}>%</Tool>
                <Tool $w={12}><b>,</b></Tool>
                <Bar $gap={3} />
                <Tool $w={14} aria-label="Increase decimal">
                  <Decimals><span><BlueArrow />.0</span><span>&nbsp;.00</span></Decimals>
                </Tool>
                <Tool $w={14} aria-label="Decrease decimal">
                  <Decimals $down><span>.00</span><span><BlueArrow right />.0</span></Decimals>
                </Tool>
              </Row>
            </Rows>
          </GroupBody>
          <GroupLabel><span>Number</span><Launcher /></GroupLabel>
        </Group>

        <Group>
          <GroupBody>
            <MenuAnchor>
              <BigButton $w={48} $active aria-expanded="true">
                <CondFormatIcon />Conditional<Caption>Formatting<Caret w={4} /></Caption>
              </BigButton>
              <ConditionalFormattingMenu />
            </MenuAnchor>
            <BigButton $w={37}><FormatTableIcon />Format as<Caption>Table<Caret w={4} /></Caption></BigButton>
            <Gallery>
              <GalleryGrid>
                <StyleTile $edge="#a0a0a0" $picked>Oscar</StyleTile>
                <StyleTile>Normal</StyleTile>
                <StyleTile $bg="#f9bccb" $fg="#9c1430">Bad</StyleTile>
                <StyleTile $bg="#c6efce" $fg="#2a7a35">Good</StyleTile>
                <StyleTile $bg="#fdea9b" $fg="#9c6a14">Neutral</StyleTile>
                <StyleTile $bg="#f2f2f2" $fg="#e87d1e" $edge="#8f8f8f" $bold>Calculation</StyleTile>
                <StyleTile $bg="#a5a5a5" $fg="#fff" $edge="#4a4a4a" $bold>Check Cell</StyleTile>
                <StyleTile $fg="#7f7f7f" $italic>Explanatory ...</StyleTile>
                <StyleTile $fg="#80208a" $line>Followed Hy...</StyleTile>
                <StyleTile $fg="#2020b0" $line>Hyperlink</StyleTile>
              </GalleryGrid>
              <GallerySide>
                <PlainButton aria-label="Previous styles"><Caret c="#bbb" up w={3} /></PlainButton>
                <PlainButton aria-label="Next styles"><Caret w={4} /></PlainButton>
                <PlainButton aria-label="More styles">
                  <svg width="5" height="5" viewBox="0 0 5 5" fill="#666"><path d="M0 0h5v1H0zM0 2h5L2.500 5z" /></svg>
                </PlainButton>
              </GallerySide>
            </Gallery>
          </GroupBody>
        </Group>

        <Group $w={91}>
          <GroupBody>
            <Stack $pad={3} />
            <BigButton $w={28}><CellsIcon kind="insert" />Insert<Caption><Caret w={4} /></Caption></BigButton>
            <BigButton $w={28}><CellsIcon kind="delete" />Delete<Caption><Caret w={4} /></Caption></BigButton>
            <BigButton $w={29}><CellsIcon kind="format" />Format<Caption><Caret w={4} /></Caption></BigButton>
          </GroupBody>
          <GroupLabel><span>Cells</span></GroupLabel>
        </Group>

        <Group $w={125}>
          <GroupBody>
            <Stack $w={64} $pad={5}>
              <SmallButton><SigmaIcon />AutoSum&nbsp;&nbsp;<Caret w={4} /></SmallButton>
              <SmallButton><FillIcon />Fill<Caret w={4} /></SmallButton>
              <SmallButton><EraserIcon />Clear<Caret w={4} /></SmallButton>
            </Stack>
            <BigButton $w={28}>
              <SortLetters><span>A<b>Z</b></span><FunnelIcon /></SortLetters>
              Sort &amp;<Caption>Filter<Caret w={4} /></Caption>
            </BigButton>
            <BigButton $w={30}><FindIcon />Find &amp;<Caption>Select<Caret w={4} /></Caption></BigButton>
          </GroupBody>
          <GroupLabel><span>Editing</span></GroupLabel>
        </Group>

        <Group $w={38}>
          <GroupBody><BigButton $w={36}><AddinsIcon />Office<Caption>Add-ins</Caption></BigButton></GroupBody>
          <GroupLabel><span>Add-ins</span></GroupLabel>
        </Group>

        <Collapse aria-label="Collapse ribbon">
          <svg width="6" height="4" viewBox="0 0 6 4" fill="none" stroke="#555" strokeWidth="1.200"><path d="M.5 3.500L3 1l2.500 2.500" /></svg>
        </Collapse>
      </Ribbon>

      <FormulaBar>
        <BarField $w={69}><input aria-label="Name box" defaultValue="B21" /><Caret w={5} /></BarField>
        <svg width="20" height="9" viewBox="0 0 20 9" fill="#999"><path d="M9 0h1v1H9zM9 3h1v1H9zM9 6h1v1H9z" /></svg>
        <BarButtons>
          <PlainButton aria-label="Cancel"><svg width="7" height="7" viewBox="0 0 7 7" stroke="#b5b5b5"><path d="M.5.5l6 6M6.500.5l-6 6" /></svg></PlainButton>
          <PlainButton aria-label="Enter"><svg width="8" height="7" viewBox="0 0 8 7" fill="none" stroke="#b5b5b5" strokeWidth="1.200"><path d="M.5 4l2 2L7.500.8" /></svg></PlainButton>
          <PlainButton><i>fx</i></PlainButton>
        </BarButtons>
        <BarField><input aria-label="Formula" defaultValue="Almagro, Nicolas" />
          <svg width="5" height="4" viewBox="0 0 5 4" fill="none" stroke="#555" strokeWidth="1.300"><path d="M.5.5l2 2.200 2-2.200" /></svg>
        </BarField>
      </FormulaBar>

      <Workspace>
        <SheetPane>
          <Sheet>
            <colgroup>
              <col width="17" />
              {COLUMNS.map((c, i) => (i === COLUMNS.length - 1 ? <col key={c} /> : <col key={c} width={columnWidth(i)} />))}
            </colgroup>
            <thead>
              <tr>
                <ColHead aria-label="Select all">
                  <Corner width="8" height="8" viewBox="0 0 8 8"><path d="M8 0v8H0z" fill="#b5b5b5" /></Corner>
                </ColHead>
                {COLUMNS.map((c) => <ColHead key={c} $on={c === "B"}>{c}</ColHead>)}
              </tr>
            </thead>
            <tbody>
              {Array.from({ length: 41 }, (_, i) => i + 1).map((row) => (
                <SheetRow key={row} $tall={row % 3 === 0}>
                  <RowHead $on={row >= 3 && row <= 21}>{row <= 40 ? row : ""}</RowHead>
                  {COLUMNS.map((c, col) => <SheetCell key={c} row={row} col={col} />)}
                </SheetRow>
              ))}
            </tbody>
          </Sheet>
        </SheetPane>
        <VScroll>
          <ScrollButton aria-label="Scroll up"><Caret up w={4} /></ScrollButton>
          <VTrack><Thumb /></VTrack>
          <ScrollButton aria-label="Scroll down"><Caret w={4} /></ScrollButton>
        </VScroll>
      </Workspace>

      <SheetBar>
        <SheetNav>
          <TitleButton $w={19} aria-label="Previous sheets"><SideCaret left c={GREEN} /></TitleButton>
          <TitleButton $w={19} aria-label="Next sheets"><SideCaret c="#c4c4c4" /></TitleButton>
          <TitleButton $w={18}>...</TitleButton>
        </SheetNav>
        {SHEETS.map(([name, w]) => (
          <SheetTab key={name} $w={w} $active={name === "Unique values (CF)"}>{name}</SheetTab>
        ))}
        <SheetAdd aria-label="New sheet">
          <svg width="11" height="11" viewBox="0 0 11 11" fill="none" stroke="#777"><circle cx="5.500" cy="5.500" r="5" /><path d="M5.500 3v5M3 5.500h5" /></svg>
        </SheetAdd>
        <HScroll>
          <svg width="11" height="7" viewBox="0 0 11 7" fill="#999"><path d="M0 0h1v1H0zM0 3h1v1H0zM0 6h1v1H0z" /></svg>
          <HButton aria-label="Scroll left"><SideCaret left /></HButton>
          <HTrack><Thumb /></HTrack>
          <HButton aria-label="Scroll right"><SideCaret /></HButton>
        </HScroll>
      </SheetBar>

      <StatusBar>
        Ready
        <Macro width="9" height="8" viewBox="0 0 9 8">
          <path d="M0 2h9v6H0z" fill="#777" /><path d="M2 4v4M4.500 4v4M7 4v4M0 5.500h9" stroke="#f1f1f1" strokeWidth=".7" /><circle cx="2" cy="1.500" r="1.500" fill="#555" />
        </Macro>
        Add to Selection
        <StatusRight>
          <Count>Count: 19</Count>
          <ViewButton $active aria-label="Normal view">
            <svg width="9" height="9" viewBox="0 0 9 9" fill="none" stroke="#666" strokeWidth=".9"><path d="M.5.5h8v8h-8zM.5 3.200h8M.5 5.800h8M3.200.5v8M5.800.5v8" /></svg>
          </ViewButton>
          <ViewButton aria-label="Page layout view">
            <svg width="9" height="9" viewBox="0 0 9 9" fill="none" stroke="#666" strokeWidth=".9"><path d="M.5.5h8v8h-8zM2.500 2.500h4v4h-4zM3 4.500h3" /></svg>
          </ViewButton>
          <ViewButton aria-label="Page break view">
            <svg width="9" height="9" viewBox="0 0 9 9" fill="none" stroke="#666" strokeWidth=".9"><path d="M.5.5h8v8h-8zM.5 5.500h5v-5M3.500.5v5" /></svg>
          </ViewButton>
          <ZoomStep>−</ZoomStep>
          <Zoom type="range" aria-label="Zoom" defaultValue={50} />
          <ZoomStep>+</ZoomStep>
          <ZoomLabel>100%</ZoomLabel>
        </StatusRight>
      </StatusBar>
    </Window>
  );
}

const Collapse = styled(PlainButton)`
  width: 55px;
  align-self: flex-end;
  height: 12px;
  padding-left: 35px;
`;

const Corner = styled.svg`
  margin: 3px 1px 0 auto;
`;

const Macro = styled.svg`
  margin: 0 14px 0 13px;
`;

const Count = styled.span`
  margin-right: 12px;
`;

const ZoomStep = styled(PlainButton)`
  width: 7px;
  height: 12px;
  font-size: 10px;
  font-weight: 700;
`;

const ZoomLabel = styled.span`
  margin-left: 10px;
`;
